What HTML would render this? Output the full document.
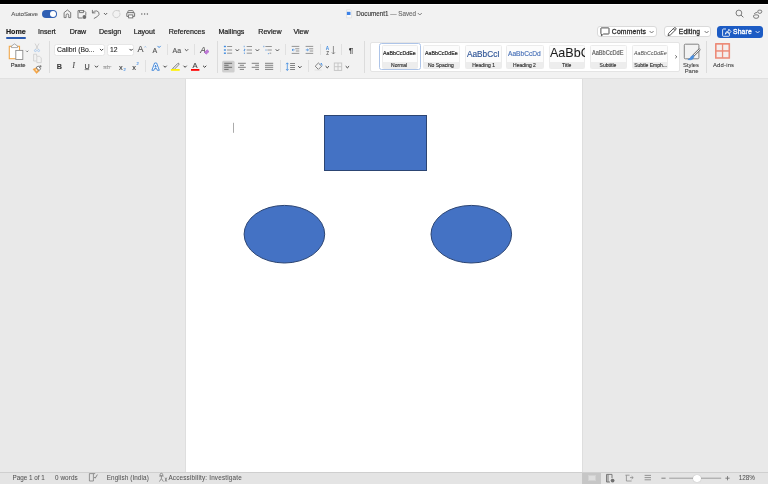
<!DOCTYPE html>
<html><head><meta charset="utf-8">
<style>
*{margin:0;padding:0;box-sizing:border-box}
html,body{width:768px;height:484px;overflow:hidden;-webkit-font-smoothing:antialiased;background:#e6e6e6;font-family:"Liberation Sans",sans-serif;color:#262626}
.a{position:absolute}
.t{position:absolute;white-space:nowrap;line-height:1;-webkit-text-stroke:0.12px currentColor}
#top{left:0;top:0;width:768px;height:3.5px;background:#000}
#chrome{left:0;top:3.5px;width:768px;height:74.5px;background:#f2f2f2;border-top:1.3px solid #fdfdfd}
#doc{left:0;top:78.4px;width:768px;height:394px;background:#e9e9e9}
#page{left:185px;top:78.4px;width:398px;height:394px;background:#fff;border-left:1px solid #dedede;border-right:1px solid #dedede}
#status{left:0;top:472px;width:768px;height:12px;background:#e4e4e4;border-top:1px solid #cfcfcf}
.tab{font-size:7.1px;color:#1c1c1c;top:28.8px;-webkit-text-stroke:0.2px #1c1c1c}
.sep{position:absolute;width:1px;background:#dcdcdc}
.chev{position:absolute;width:3px;height:3px;border-right:1px solid #555;border-bottom:1px solid #555;transform:rotate(45deg)}
.sb{font-size:6.3px;color:#555;top:475px;-webkit-text-stroke:0.05px #555}
.sbox{position:absolute;top:45.2px;height:24px;background:linear-gradient(#fcfcfc 0,#fcfcfc 15.6px,#ededed 15.6px);border:0.5px solid #ececec;border-radius:1.5px}
.clip{position:absolute;top:0;height:61px;overflow:hidden}
.smp{color:#222;-webkit-text-stroke:0.18px currentColor;transform-origin:0 0}
.slab{font-size:5px;color:#333;top:62.5px;-webkit-text-stroke:0.15px #333}
</style></head>
<body><div style="position:absolute;left:0;top:0;width:768px;height:484px;will-change:transform">
<div id="top" class="a"></div>
<div id="chrome" class="a"></div>
<div id="doc" class="a"></div>
<div id="page" class="a"></div>

<!-- shapes -->
<svg class="a" style="left:0;top:0" width="768" height="484">
  <rect x="324.5" y="115.5" width="102" height="55" fill="#4472c4" stroke="#2c4573" stroke-width="1"/>
  <ellipse cx="284.4" cy="234.2" rx="40.3" ry="28.8" fill="#4472c4" stroke="#2c4573" stroke-width="1"/>
  <ellipse cx="471.3" cy="234.2" rx="40.3" ry="28.8" fill="#4472c4" stroke="#2c4573" stroke-width="1"/>
  <rect x="233" y="122.8" width="1" height="10" fill="#ababab"/>
</svg>


<!-- title bar -->
<div class="t" style="left:11.3px;top:10.9px;font-size:6.15px;color:#5a5a5a">AutoSave</div>
<div class="a" style="left:42.3px;top:10.2px;width:14.8px;height:7.8px;border-radius:4px;background:#2f5fb3"></div>
<div class="a" style="left:50.3px;top:11px;width:6.2px;height:6.2px;border-radius:50%;background:#fff"></div>
<svg class="a" style="left:0;top:0" width="160" height="24" fill="none" stroke="#6e6e6e" stroke-width="0.9">
  <path d="M64.1 17.6 V12.6 L67.4 10 L70.7 12.6 V17.6 H68.7 V15.2 A1.3 1.3 0 0 0 66.1 15.2 V17.6 Z" stroke-linejoin="round"/>
  <path d="M78 10.6 H84 L85.8 12.4 V15.5 M78 10.6 V18 H82.5" />
  <path d="M79.5 10.6 V12.6 H83.5 V10.6" />
  <circle cx="84.4" cy="17" r="1.9" fill="#6e6e6e" stroke="none"/>
  <path d="M92.4 10.3 V12.9 H95 M92.6 12.7 Q94.6 10.4 96.8 10.9 Q99.6 11.8 99 14.6 Q98.4 16.4 94.2 18.4" stroke-linecap="round" stroke-linejoin="round"/>
  <path d="M104.2 13.3 L105.6 14.7 L106.9 13.3" stroke="#555" stroke-width="0.95" stroke-linecap="round" stroke-linejoin="round"/>
  <path d="M119.7 12.6 A3.6 3.6 0 1 1 118.6 11.2" stroke="#cccccc" stroke-width="0.9"/><path d="M117.9 10.6 L119.3 10.4 L119.5 11.9" stroke="#cccccc" stroke-width="0.8"/>
  <path d="M127.9 13.3 V11.4 Q127.9 10.6 128.7 10.6 H132.5 Q133.3 10.6 133.3 11.4 V13.3" />
  <path d="M128.3 16.4 H126.8 V13.2 Q126.8 12.6 127.6 12.6 H133.8 Q134.6 12.6 134.6 13.2 V16.4 H133" stroke-width="0.95"/>
  <rect x="128.6" y="14.9" width="4.2" height="3" fill="#fff" stroke-width="0.9"/>
  <circle cx="141.8" cy="14.1" r="0.75" fill="#666" stroke="none"/>
  <circle cx="144.6" cy="14.1" r="0.75" fill="#666" stroke="none"/>
  <circle cx="147.4" cy="14.1" r="0.75" fill="#666" stroke="none"/>
</svg>
<svg class="a" style="left:340px;top:6px" width="90" height="16">
  <path d="M6.6 3.8 H10.4 L11.6 5 V11.8 H6.6 Z" fill="#fafafa" stroke="#d6d6d6" stroke-width="0.6"/>
  <rect x="6.9" y="5.8" width="3.6" height="3.2" fill="#3c82e8"/>
</svg>
<div class="t" style="left:356.2px;top:11.1px;font-size:6.3px;color:#333">Document1 <span style="color:#6d6d6d">— Saved</span></div>
<svg class="a" style="left:416px;top:11px" width="8" height="6"><path d="M1.8 2 L3.8 4 L5.8 2" fill="none" stroke="#666" stroke-width="0.8"/></svg>
<svg class="a" style="left:730px;top:6px" width="38" height="16" fill="none" stroke="#707070" stroke-width="0.9">
  <circle cx="8.9" cy="7" r="2.9"/>
  <path d="M11 9.1 L13.4 11.3" stroke-width="1"/>
  <path d="M23.4 10 Q23.4 8.8 26.1 8.8 Q28.8 8.8 28.8 10 Q28.8 12.4 26.1 12.4 Q23.4 12.4 23.4 10 Z"/>
  <path d="M24.3 8 Q24.6 6.6 27.3 6.4"/>
  <path d="M27.7 5.1 Q27.7 4.1 29.8 4.1 Q31.9 4.1 31.9 5.1 Q31.9 7.4 29.8 7.4 Q27.7 7.4 27.7 5.1 Z"/>
</svg>
<!-- right buttons -->
<div class="a" style="left:596.7px;top:25.8px;width:60.3px;height:11.4px;border-radius:3px;background:#fff;border:0.7px solid #dadada"></div>
<svg class="a" style="left:598px;top:26px" width="14" height="12" fill="none" stroke="#444" stroke-width="0.95">
  <path d="M3.3 1.9 H10.6 Q11 1.9 11 2.3 V7.6 Q11 8 10.6 8 H5.6 L3.4 9.8 V8 H3.3 Q2.9 8 2.9 7.6 V2.3 Q2.9 1.9 3.3 1.9 Z" stroke-linejoin="round"/>
</svg>
<div class="t" style="left:611.8px;top:29.2px;font-size:6.85px;color:#2e2e2e;-webkit-text-stroke:0.3px #2e2e2e;letter-spacing:0.15px">Comments</div>
<svg class="a" style="left:648px;top:29px" width="8" height="6"><path d="M1.6 2 L3.6 4 L5.6 2" fill="none" stroke="#555" stroke-width="0.8"/></svg>
<div class="a" style="left:663.8px;top:25.8px;width:47.4px;height:11.4px;border-radius:3px;background:#fff;border:0.7px solid #dadada"></div>
<svg class="a" style="left:666px;top:26px" width="12" height="12" fill="none" stroke="#444" stroke-width="0.9">
  <path d="M2 9.6 L2.6 7.3 L8.2 1.9 Q9 1.2 9.8 2 Q10.5 2.8 9.8 3.6 L4.3 9 Z" stroke-linejoin="round"/>
  <path d="M7.4 2.7 L9 4.4"/>
</svg>
<div class="t" style="left:678.8px;top:29.2px;font-size:6.65px;color:#2e2e2e;-webkit-text-stroke:0.3px #2e2e2e;letter-spacing:0.15px">Editing</div>
<svg class="a" style="left:703px;top:29px" width="8" height="6"><path d="M1.6 2 L3.6 4 L5.6 2" fill="none" stroke="#555" stroke-width="0.8"/></svg>
<div class="a" style="left:717.3px;top:25.8px;width:45.6px;height:11.9px;border-radius:3.5px;background:#1c5bc4"></div>
<svg class="a" style="left:720px;top:26px" width="14" height="12" fill="none" stroke="#fff" stroke-width="0.85">
  <path d="M6 3 H3.4 Q2.6 3 2.6 3.8 V9.6 Q2.6 10.3 3.4 10.3 H8.6 Q9.4 10.3 9.4 9.6 V7.4" />
  <path d="M5.2 8.2 Q5.6 5.2 8.8 4.8 V3.2 L11 5.6 L8.8 7.8 V6.3 Q6.6 6.3 5.2 8.2 Z" stroke-linejoin="round"/>
</svg>
<div class="t" style="left:733px;top:29.2px;font-size:6.8px;color:#fff;-webkit-text-stroke:0.3px #fff;letter-spacing:0.15px">Share</div>
<svg class="a" style="left:754px;top:29px" width="8" height="6"><path d="M1.6 2 L3.6 4 L5.6 2" fill="none" stroke="#fff" stroke-width="0.8"/></svg>


<!-- ribbon -->
<div class="a" style="left:0;top:77.6px;width:768px;height:1px;background:#e1e1e1"></div>
<div class="sep" style="left:48.8px;top:41px;height:32px"></div>
<div class="sep" style="left:216.5px;top:41px;height:32px"></div>
<div class="sep" style="left:363.6px;top:41px;height:32px"></div>
<div class="sep" style="left:706px;top:41px;height:32px"></div>
<div class="sep" style="left:166.8px;top:44px;height:11px;background:#e0e0e0"></div>
<div class="sep" style="left:194.4px;top:44px;height:11px;background:#e0e0e0"></div>
<div class="sep" style="left:145.2px;top:60px;height:12px;background:#e0e0e0"></div>
<div class="sep" style="left:285px;top:44px;height:11px;background:#e0e0e0"></div>
<div class="sep" style="left:319.5px;top:44px;height:11px;background:#e0e0e0"></div>
<div class="sep" style="left:341.2px;top:44px;height:11px;background:#e0e0e0"></div>
<div class="sep" style="left:279.5px;top:60px;height:12px;background:#e0e0e0"></div>
<div class="sep" style="left:307.5px;top:60px;height:12px;background:#e0e0e0"></div>

<!-- font boxes -->
<div class="a" style="left:54px;top:44px;width:51.3px;height:12.2px;background:#fff;border-radius:2.5px;border:0.5px solid #e6e6e6"></div>
<div class="a" style="left:107px;top:44px;width:27.4px;height:12.2px;background:#fff;border-radius:2.5px;border:0.5px solid #e6e6e6"></div>
<div class="t" style="left:57px;top:46.8px;font-size:6.8px;color:#2a2a2a">Calibri (Bo...</div>
<div class="t" style="left:110px;top:46.8px;font-size:6.8px;color:#2a2a2a">12</div>

<div class="t" style="left:10.7px;top:62.9px;font-size:5.8px;color:#333">Paste</div>
<div class="t" style="left:56.8px;top:63.4px;font-size:7.2px;color:#3a3a3a;font-weight:bold">B</div>
<div class="t" style="left:72.4px;top:63.4px;font-size:7.2px;color:#3a3a3a;font-style:italic;font-family:'Liberation Serif',serif">I</div>
<div class="t" style="left:84.4px;top:63.4px;font-size:7.2px;color:#3a3a3a">U</div>
<div class="t" style="left:119px;top:63.6px;font-size:7.4px;color:#3a3a3a">x</div>
<div class="t" style="left:132.3px;top:63.6px;font-size:7.4px;color:#3a3a3a">x</div>
<div class="t" style="left:123.4px;top:67.7px;font-size:4px;color:#3d8ae0">2</div>
<div class="t" style="left:136.6px;top:61.8px;font-size:4px;color:#3d8ae0">2</div>
<div class="t" style="left:137.6px;top:45.4px;font-size:9px;color:#505050">A</div>
<div class="t" style="left:152.5px;top:47.2px;font-size:7px;color:#505050">A</div>
<div class="t" style="left:172.6px;top:47.3px;font-size:7px;color:#555">Aa</div>
<div class="t" style="left:200.2px;top:45.6px;font-size:8.4px;color:#505050;font-style:italic">A</div>
<div class="t" style="left:192.4px;top:62.4px;font-size:7.6px;color:#444">A</div>

<svg class="a" style="left:0;top:0" width="768" height="80" fill="none" stroke="#666" stroke-width="0.8">
  <!-- paste -->
  <rect x="9.3" y="46.3" width="10.2" height="12.4" stroke="#f0a64a" stroke-width="1.1" fill="#fff"/>
  <path d="M11.4 47.6 V46.1 L14.5 43.9 L17.6 46.1 V47.6 Z" fill="#fafafa" stroke="#8a8a8a" stroke-width="0.7"/>
  <rect x="15.8" y="50.4" width="7" height="9.1" fill="#fff" stroke="#8d8d8d" stroke-width="0.9"/>
  <path d="M26.1 50.7 L27.2 51.8 L28.3 50.7" stroke="#555"/>
  <!-- cut -->
  <path d="M35 43.5 L38.4 49.6 M39 43.5 L35.6 49.6" stroke="#c4c4c4" stroke-width="0.7"/>
  <circle cx="35.4" cy="50.6" r="1" stroke="#9cc1ec" stroke-width="0.7"/>
  <circle cx="38.6" cy="50.6" r="1" stroke="#9cc1ec" stroke-width="0.7"/>
  <!-- copy -->
  <path d="M36.6 56 V54.2 H33.6 V61 H36.6" stroke="#c8c8c8" stroke-width="0.7"/>
  <path d="M36.8 56.3 H39.6 L41.3 58 V62.6 H36.8 Z" stroke="#c8c8c8" stroke-width="0.7"/>
  <!-- format painter -->
  <path d="M33 69.2 L36.2 67.8 L39.2 71 L36.6 73.6 Z" fill="#f3a343" stroke="#f3a343" stroke-width="0.5" stroke-linejoin="round"/>
  <path d="M35.2 69.4 L36.4 68.9 L37.6 70.3 L36.3 71.4 Z" fill="#fbe3c2" stroke="none"/>
  <path d="M36 67.6 L38.4 66 L40.6 68.8 L39.2 70.6 Z" fill="#fff" stroke="#6a6a6a" stroke-width="0.9" stroke-linejoin="round"/>
  <circle cx="40.4" cy="66.4" r="1.1" fill="#7a7a7a" stroke="none"/>
  <!-- font box chevrons -->
  <path d="M100.2 49.2 L101.6 50.5 L102.9 49.2" stroke="#333" stroke-width="0.95" stroke-linecap="round" stroke-linejoin="round"/>
  <path d="M129.8 49.2 L131.1 50.5 L132.4 49.2" stroke="#333" stroke-width="0.95" stroke-linecap="round" stroke-linejoin="round"/>
  <!-- grow/shrink carets -->
  <path d="M144.6 47.3 L145.3 46.6 L146 47.3" stroke="#3d8ae0" stroke-width="0.6"/>
  <path d="M157.8 46.2 L159.1 47.6 L160.4 46.2" stroke="#3d8ae0" stroke-width="0.95" stroke-linecap="round" stroke-linejoin="round"/>
  <path d="M185.2 49.5 L186.6 50.8 L187.9 49.5" stroke="#444" stroke-width="0.95" stroke-linecap="round" stroke-linejoin="round"/>
  <!-- eraser -->
  <path d="M204.4 52.4 L207.2 49.8 L209 51.6 L206.2 54.2 Z" fill="#c07ad8" stroke="#a854c8" stroke-width="0.6"/>
  <!-- row2 chevrons -->
  <path d="M95.2 66.0 L96.5 67.3 L97.8 66.0" stroke="#333" stroke-width="0.95" stroke-linecap="round" stroke-linejoin="round"/>
  <path d="M163.8 66.0 L165.1 67.3 L166.4 66.0" stroke="#333" stroke-width="0.95" stroke-linecap="round" stroke-linejoin="round"/>
  <path d="M183.8 66.0 L185.1 67.3 L186.4 66.0" stroke="#333" stroke-width="0.95" stroke-linecap="round" stroke-linejoin="round"/>
  <path d="M203.3 66.0 L204.7 67.3 L206.0 66.0" stroke="#333" stroke-width="0.95" stroke-linecap="round" stroke-linejoin="round"/>
  <!-- underline -->
  <path d="M84.6 69.6 H89.2" stroke="#444" stroke-width="0.6"/>
  <!-- strikethrough abc -->
  <text x="103.2" y="68.6" font-size="6.2" fill="#9a9a9a" stroke="none" font-family="Liberation Sans">ab</text>
  <path d="M103 66.6 H111.4" stroke="#9a9a9a" stroke-width="0.6"/>
  <!-- text effects A -->
  <path d="M151.9 70.3 L154.6 63 H156.6 L159.3 70.3 H157.3 L156.7 68.6 H154.5 L153.9 70.3 Z M155 67.1 H156.2 L155.6 65.2 Z" fill="#fff" stroke="#2e7bd6" stroke-width="0.85" stroke-linejoin="round"/>
  <!-- highlighter -->
  <path d="M173 68.2 L177.6 63.6 Q178.4 63 179 63.6 Q179.4 64.2 178.8 64.8 L174.2 69.4 L172.6 69.2 Z" stroke="#555" stroke-width="0.7"/>
  <rect x="170.9" y="69" width="8.8" height="1.8" fill="#fff200" stroke="none"/>
  <rect x="191" y="69" width="8.4" height="1.8" fill="#ff0000" stroke="none"/>
  <!-- bullets -->
  <rect x="223.9" y="45.8" width="2" height="1.4" fill="#3d8ae0" stroke="none"/>
  <rect x="223.9" y="49.3" width="2" height="1.4" fill="#3d8ae0" stroke="none"/>
  <rect x="223.9" y="52.5" width="2" height="1.4" fill="#3d8ae0" stroke="none"/>
  <path d="M227.1 46.5 H232.1 M227.1 50 H232.1 M227.1 53.2 H232.1" stroke="#8a8a8a" stroke-width="0.9"/>
  <path d="M236.0 49.6 L237.3 51.0 L238.7 49.6" stroke="#444" stroke-width="0.95" stroke-linecap="round" stroke-linejoin="round"/>
  <path d="M244.2 45.8 V47.2 M244 49.3 H245 V50 H244 V50.8 H245 M244.4 52.5 V54" stroke="#3d8ae0" stroke-width="0.7"/>
  <path d="M246.7 46.5 H252 M246.7 50 H252 M246.7 53.2 H252" stroke="#8a8a8a" stroke-width="0.9"/>
  <path d="M256.0 49.6 L257.4 51.0 L258.8 49.6" stroke="#444" stroke-width="0.95" stroke-linecap="round" stroke-linejoin="round"/>
  <path d="M263.8 45.8 V47.2 M266 49.3 V50.8 M268.4 53 V54.2" stroke="#3d8ae0" stroke-width="0.7"/>
  <path d="M265.4 46.5 H271.8 M267.4 50 H271.8 M269.6 53.2 H271.2" stroke="#8a8a8a" stroke-width="0.9"/>
  <path d="M276.0 49.6 L277.4 51.0 L278.8 49.6" stroke="#444" stroke-width="0.95" stroke-linecap="round" stroke-linejoin="round"/>
  <!-- indents -->
  <path d="M291.7 46.4 H299.3 M295.2 48.8 H299.3 M295.8 51 H299.3 M291.7 53.4 H299.3" stroke="#8a8a8a" stroke-width="0.9"/>
  <path d="M292 49.9 H294.6 M292 49.9 L293.2 48.8 M292 49.9 L293.2 51" stroke="#3d8ae0" stroke-width="0.8"/>
  <path d="M305.6 46.4 H313.2 M309.1 48.8 H313.2 M309.7 51 H313.2 M305.6 53.4 H313.2" stroke="#8a8a8a" stroke-width="0.9"/>
  <path d="M305.8 49.9 H308.4 M308.4 49.9 L307.2 48.8 M308.4 49.9 L307.2 51" stroke="#3d8ae0" stroke-width="0.8"/>
  <!-- sort -->
  <text x="325.8" y="49.9" font-size="4.6" font-weight="bold" fill="#3d8ae0" stroke="none" font-family="Liberation Sans">A</text>
  <text x="326.2" y="54.6" font-size="4.6" font-weight="bold" fill="#666" stroke="none" font-family="Liberation Sans">Z</text>
  <path d="M333.4 46 V54 M331.9 52.4 L333.4 54 L334.9 52.4" stroke="#777" stroke-width="0.8"/>
  <!-- pilcrow -->
  <text x="348.8" y="53.3" font-size="8" font-weight="bold" fill="#333" stroke="none" font-family="Liberation Sans">¶</text>
  <!-- align -->
  <rect x="222.1" y="60.7" width="12.5" height="11.9" rx="1.5" fill="#cfcfcf" stroke="none"/>
  <path d="M224.2 63.3 H232.1 M224.2 65.3 H228.6 M224.2 67.3 H232.1 M224.2 69.4 H228.6" stroke="#555" stroke-width="0.8"/>
  <path d="M238 63.3 H245.8 M239.8 65.3 H244 M238 67.3 H245.8 M239.8 69.4 H244" stroke="#666" stroke-width="0.8"/>
  <path d="M251.7 63.3 H259 M255.2 65.3 H259 M251.7 67.3 H259 M255.2 69.4 H259" stroke="#666" stroke-width="0.8"/>
  <path d="M265 63.3 H273.2 M265 65.3 H273.2 M265 67.3 H273.2 M265 69.4 H273.2" stroke="#666" stroke-width="0.8"/>
  <!-- line spacing -->
  <path d="M287.3 63 V70.3 M286.1 64.2 L287.3 62.8 L288.5 64.2 M286.1 69.1 L287.3 70.5 L288.5 69.1" stroke="#3d8ae0" stroke-width="0.8"/>
  <path d="M290.1 63.5 H295 M290.1 65.5 H295 M290.1 67.5 H295 M290.1 69.5 H295" stroke="#777" stroke-width="0.9"/>
  <path d="M298.5 66.5 L299.9 67.8 L301.2 66.5" stroke="#333" stroke-width="0.95" stroke-linecap="round" stroke-linejoin="round"/>
  <!-- shading -->
  <path d="M315.2 66.2 L318.4 63 L321.6 66.2 L318.4 69.4 Z" stroke="#666" stroke-width="0.8"/>
  <path d="M320.2 64.4 L321.4 63.2 L322.2 65.6" stroke="#3d8ae0" stroke-width="0.9"/>
  <path d="M314.6 70 H321.6" stroke="#ddd" stroke-width="0.8"/>
  <path d="M325.9 66.5 L327.3 67.8 L328.7 66.5" stroke="#333" stroke-width="0.95" stroke-linecap="round" stroke-linejoin="round"/>
  <!-- borders -->
  <rect x="334.3" y="63" width="7.4" height="7.4" stroke="#c4c4c4" stroke-width="0.9"/>
  <path d="M338 63 V70.4 M334.3 66.7 H341.7" stroke="#c4c4c4" stroke-width="0.9"/>
  <path d="M346.0 66.5 L347.4 67.8 L348.8 66.5" stroke="#333" stroke-width="0.95" stroke-linecap="round" stroke-linejoin="round"/>
</svg>


<!-- styles gallery -->
<div class="a" style="left:369.6px;top:41.9px;width:310.6px;height:30px;background:#fff;border:0.6px solid #e4e4e4;border-radius:2px"></div>
<div class="a" style="left:379.2px;top:43.2px;width:41.4px;height:27.3px;border:1.2px solid #adc4e8;border-radius:2.5px"></div>
<div class="sbox" style="left:381.6px;width:36.5px"></div>
<div class="sbox" style="left:423.3px;width:36.3px"></div>
<div class="sbox" style="left:465.1px;width:36.7px"></div>
<div class="sbox" style="left:506.4px;width:37.2px"></div>
<div class="sbox" style="left:548.6px;width:36.4px"></div>
<div class="sbox" style="left:590.2px;width:36.7px"></div>
<div class="sbox" style="left:632.1px;width:36.2px"></div>
<div class="clip" style="left:381.6px;width:36.5px"><div class="t smp" style="left:1.8px;top:50px;font-size:6.1px;transform:scaleX(0.87)">AaBbCcDdEe</div></div>
<div class="clip" style="left:423.3px;width:36.3px"><div class="t smp" style="left:2px;top:50px;font-size:6.1px;transform:scaleX(0.87)">AaBbCcDdEe</div></div>
<div class="clip" style="left:465.1px;width:36.7px"><div class="t smp" style="left:1.7px;top:48.9px;font-size:9.6px;color:#2f5597;transform:scaleX(0.86)">AaBbCcI</div></div>
<div class="clip" style="left:506.4px;width:37.2px"><div class="t smp" style="left:1.8px;top:49.8px;font-size:7.6px;color:#4a72b8;transform:scaleX(0.87)">AaBbCcDd</div></div>
<div class="clip" style="left:548.6px;width:36.4px"><div class="t smp" style="left:1.8px;top:46.3px;font-size:13.2px;color:#1a1a1a;transform:scaleX(0.95);-webkit-text-stroke:0.05px #1a1a1a">AaBbC</div></div>
<div class="clip" style="left:590.2px;width:36.7px"><div class="t smp" style="left:2px;top:50.3px;font-size:6.6px;color:#5c5c5c;transform:scaleX(0.85)">AaBbCcDdE</div></div>
<div class="clip" style="left:632.1px;width:36.2px"><div class="t smp" style="left:2px;top:50.1px;font-size:6.1px;color:#444;font-style:italic;transform:scaleX(0.87);-webkit-text-stroke:0">AaBbCcDdEe</div></div>
<div class="t slab" style="left:391.1px">Normal</div>
<div class="t slab" style="left:428px">No Spacing</div>
<div class="t slab" style="left:472.2px">Heading 1</div>
<div class="t slab" style="left:513.1px">Heading 2</div>
<div class="t slab" style="left:562.1px">Title</div>
<div class="t slab" style="left:599.6px">Subtitle</div>
<div class="t slab" style="left:634.2px">Subtle Emph...</div>
<svg class="a" style="left:670px;top:40px" width="100" height="34" fill="none">
  <path d="M5.3 15.4 L6.9 16.8 L5.3 18.2" stroke="#444" stroke-width="0.8"/>
  <rect x="14.3" y="4.2" width="14.6" height="14.6" rx="1" stroke="#777" stroke-width="0.9"/>
  <path d="M29.4 9.6 L23.4 15.6" stroke="#777" stroke-width="2.2" stroke-linecap="round"/>
  <path d="M29.4 9.6 L23.4 15.6" stroke="#fff" stroke-width="0.9" stroke-linecap="round"/>
  <path d="M23.8 15.2 Q21 15.6 20.4 17.6 Q19.6 19.2 17.8 19.6 Q21.6 20.4 23 18.8 Q24.2 17.4 23.8 15.2 Z" fill="#4a90e2" stroke="#3a80d2" stroke-width="0.5"/>
  <rect x="45" y="3.1" width="15.1" height="15.7" rx="0.6" fill="#ec8b78"/>
  <rect x="46.6" y="4.7" width="5.3" height="5.5" fill="#f4eeed"/>
  <rect x="53.2" y="4.7" width="5.3" height="5.5" fill="#f4eeed"/>
  <rect x="46.6" y="11.7" width="5.3" height="5.5" fill="#f4eeed"/>
  <rect x="53.2" y="11.7" width="5.3" height="5.5" fill="#f4eeed"/>
</svg>
<div class="t" style="left:682.9px;top:62.6px;font-size:5.9px;color:#333;-webkit-text-stroke:0.05px #333">Styles</div>
<div class="t" style="left:684.7px;top:68.9px;font-size:5.9px;color:#333;-webkit-text-stroke:0.05px #333">Pane</div>
<div class="t" style="left:712.9px;top:63px;font-size:5.9px;color:#333;-webkit-text-stroke:0.05px #333;letter-spacing:0.2px">Add-ins</div>

<!-- tabs -->
<div class="t tab" style="left:6px;font-weight:bold;color:#222">Home</div>
<div class="a" style="left:6px;top:37px;width:19.5px;height:1.5px;background:#2b5bb0;border-radius:1px"></div>
<div class="t tab" style="left:38px">Insert</div>
<div class="t tab" style="left:69.7px">Draw</div>
<div class="t tab" style="left:99px">Design</div>
<div class="t tab" style="left:133.7px">Layout</div>
<div class="t tab" style="left:168.7px">References</div>
<div class="t tab" style="left:218.4px">Mailings</div>
<div class="t tab" style="left:258.3px">Review</div>
<div class="t tab" style="left:293.4px">View</div>

<!-- status bar -->
<div id="status" class="a"></div>
<div class="a" style="left:582px;top:472.6px;width:18.8px;height:11.4px;background:#c6c6c6"></div>
<div class="a" style="left:587.8px;top:474.5px;width:7.8px;height:6.5px;background:#dedede;border:0.6px solid #d2d2d2;border-radius:0.5px"></div>
<div class="t sb" style="left:12.5px">Page 1 of 1</div>
<div class="t sb" style="left:55px;letter-spacing:0.1px">0 words</div>
<div class="t sb" style="left:106.8px;letter-spacing:0.12px">English (India)</div>
<div class="t sb" style="left:168.4px;letter-spacing:0.2px">Accessibility: Investigate</div>
<div class="t sb" style="left:738.8px">128%</div>
<svg class="a" style="left:0;top:470px" width="768" height="14" fill="none" stroke="#707070" stroke-width="0.7">
  <path d="M89.4 3.6 H93.4 V11 H89.4 Z M93.4 3.6 H95.2" />
  <path d="M94.2 7 L95.2 8.2 L97.4 4.6" stroke-width="0.8"/>
  <path d="M159.4 11.6 L161.4 8.6 L163.4 11.6 M161.4 8.6 V6.2 M159 6 H163.8 M165 7.6 L166.8 11.6 M166.8 7.6 L165 11.6" stroke-width="0.7"/>
  <circle cx="161.4" cy="4.6" r="1.3"/>
  <path d="M606.5 4.4 H612 V8.2 M606.5 4.4 V12 H610" stroke-width="0.9"/>
  <path d="M608 4.4 V12" stroke-width="0.9"/>
  <circle cx="612.6" cy="10.6" r="1.9" fill="#707070" stroke="none"/>
  <path d="M625.4 5.2 H629.6 M626.4 5.2 V11 H631.6 M630 7.6 L633.2 7.6 M631.6 6.2 L633.2 7.6 L631.6 9" stroke="#8a8a8a" stroke-width="0.8"/>
  <path d="M644.6 5.4 H651 M644.6 7.6 H651 M644.6 9.8 H651" stroke="#8a8a8a" stroke-width="0.9"/>
  <path d="M661.4 8.2 H665.6" stroke="#777" stroke-width="0.9"/>
  <path d="M669.2 8.2 H721.2" stroke="#9d9d9d" stroke-width="1"/>
  <path d="M725.4 8.2 H729.6 M727.5 6.1 V10.3" stroke="#777" stroke-width="0.9"/>
</svg>
<div class="a" style="left:693px;top:474.5px;width:7.6px;height:7.6px;border-radius:50%;background:#fff;box-shadow:0 0 0.8px rgba(0,0,0,0.35)"></div>
</div></body></html>
